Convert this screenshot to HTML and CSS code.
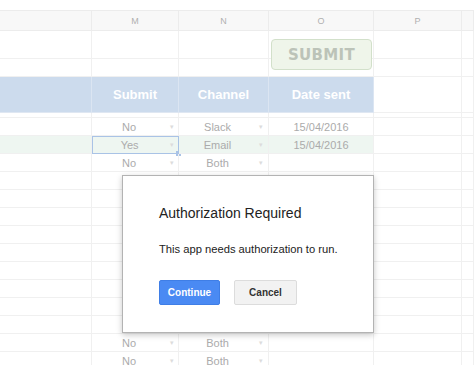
FILE: index.html
```html
<!DOCTYPE html>
<html lang="en">
<head>
    <meta charset="UTF-8">
    <title>Authorization Required</title>
    <link rel="stylesheet" href="styles.css">
</head>
<body>
    <div class="sheet">
        <div class="top-space"></div>

        <div class="row col-head">
            <div class="cell"></div>
            <div class="cell">M</div>
            <div class="cell">N</div>
            <div class="cell">O</div>
            <div class="cell">P</div>
            <div class="cell"></div>
        </div>

        <div class="row tall">
            <div class="cell"></div>
            <div class="cell"></div>
            <div class="cell"></div>
            <div class="cell submit-cell">
                <div class="submit-btn">SUBMIT</div>
            </div>
            <div class="cell"></div>
            <div class="cell"></div>
        </div>
        <div class="row">
            <div class="cell"></div><div class="cell"></div><div class="cell"></div>
            <div class="cell"></div><div class="cell"></div><div class="cell"></div>
        </div>

        <div class="row head">
            <div class="cell"></div>
            <div class="cell">Submit</div>
            <div class="cell">Channel</div>
            <div class="cell">Date sent</div>
            <div class="cell plain"></div>
            <div class="cell plain"></div>
        </div>
        <div class="row gap">
            <div class="cell"></div><div class="cell"></div><div class="cell"></div>
            <div class="cell"></div><div class="cell"></div><div class="cell"></div>
        </div>

        <div id="rows"></div>

        <!-- 授權對話框 -->
        <div class="dialog">
            <h2>Authorization Required</h2>
            <p>This app needs authorization to run.</p>
            <div class="actions">
                <button class="btn primary">Continue</button>
                <button class="btn">Cancel</button>
            </div>
        </div>
    </div>

    <script>
        // 資料列 (對話框後面的列沒有文字)
        const data = [
            ["No", "Slack", "15/04/2016"],
            ["Yes", "Email", "15/04/2016"],
            ["No", "Both", ""],
            ["", "", ""], ["", "", ""], ["", "", ""],
            ["", "", ""], ["", "", ""], ["", "", ""],
            ["", "", ""], ["", "", ""], ["", "", ""],
            ["No", "Both", ""], ["No", "Both", ""]
        ];
        const rows = document.getElementById('rows');

        data.forEach((d, i) => {
            const row = document.createElement('div');
            row.className = 'row' + (i === 1 ? ' active' : '');
            row.innerHTML =
                '<div class="cell"></div>' +
                '<div class="cell drop' + (i === 1 ? ' selected' : '') + '"><span>' + d[0] + '</span><i>' + (d[0] ? '▾' : '') + '</i></div>' +
                '<div class="cell drop"><span>' + d[1] + '</span><i>' + (d[1] ? '▾' : '') + '</i></div>' +
                '<div class="cell date">' + d[2] + '</div>' +
                '<div class="cell plain"></div>' +
                '<div class="cell plain"></div>';
            rows.appendChild(row);
        });
    </script>
</body>
</html>
```

FILE: styles.css
```css
body {
    margin: 0;
    font-family: "Liberation Sans", Arial, sans-serif;
    background: #fff;
    overflow: hidden;
}
.sheet {
    position: relative;
    height: 365px;
}
.top-space {
    height: 10px;
}
.row {
    display: grid;
    grid-template-columns: 92px 87px 90px 105px 88px 1fr;
    height: 18px;
}
.cell {
    box-sizing: border-box;
    border-right: 1px solid #f0f0f0;
    border-bottom: 1px solid #f0f0f0;
    font-size: 11px;
    color: #ababab;
    display: flex;
    align-items: center;
    justify-content: center;
    position: relative;
}

.col-head {
    height: 21px;
    background: #f8f8f8;
    border-top: 1px solid #ececec;
    box-sizing: border-box;
}
.col-head .cell {
    font-size: 9px;
    color: #b0b0b0;
    border-color: #ececec;
    padding-top: 1px;
}
.row.tall {
    height: 28px;
}

/* 表頭 */
.row.head {
    height: 36px;
}
.head .cell {
    background: #ccdbed;
    color: #fff;
    font-weight: bold;
    font-size: 13px;
    border-right-color: #dbe5f2;
    border-bottom-color: #dfe7f2;
}
.head .cell.plain {
    background: #fff;
    border-right-color: #f0f0f0;
    border-bottom-color: #f0f0f0;
}
.row.gap {
    height: 5px;
}

/* 下拉選單儲存格 */
.drop span {
    width: 75px;
    text-align: center;
}
.drop i {
    font-style: normal;
    font-size: 7px;
    color: #dcdcdc;
    width: 12px;
    text-align: center;
}
.active .cell {
    background: #eef6f1;
}
.active .cell.plain {
    background: #fff;
}
.cell.selected {
    border: 1.5px solid #a9c3e6;
}
.cell.selected::after {
    content: "";
    position: absolute;
    right: -3px;
    bottom: -3px;
    width: 5px;
    height: 5px;
    background: #a9c3e6;
}

/* SUBMIT 按鈕 */
.submit-btn {
    position: absolute;
    left: 2px;
    top: 8px;
    width: 101px;
    height: 31px;
    box-sizing: border-box;
    border: 1px solid #d2e0ca;
    border-radius: 4px;
    background: #eff5ea;
    color: #bcc3b8;
    font-family: "DejaVu Sans", sans-serif;
    font-weight: bold;
    font-size: 15px;
    letter-spacing: 0.3px;
    display: flex;
    align-items: center;
    justify-content: center;
    z-index: 1;
}

/* 對話框 */
.dialog {
    position: absolute;
    left: 122px;
    top: 175px;
    width: 252px;
    height: 158px;
    box-sizing: border-box;
    background: #fff;
    border: 1px solid #b3b3b3;
    box-shadow: 0 2px 6px rgba(0, 0, 0, 0.22);
    padding: 29px 0 0 36px;
    z-index: 2;
}
.dialog h2 {
    margin: 0;
    font-size: 14px;
    font-weight: normal;
    color: #222;
    line-height: 16px;
}
.dialog p {
    margin: 21px 0 0;
    font-size: 11.2px;
    color: #222;
    line-height: 14px;
}
.actions {
    display: flex;
    gap: 14px;
    margin-top: 24px;
}
.btn {
    height: 25px;
    width: 63px;
    box-sizing: border-box;
    border: 1px solid #dcdcdc;
    border-radius: 2px;
    background: #f2f2f2;
    color: #333;
    font-family: "Liberation Sans", Arial, sans-serif;
    font-weight: bold;
    font-size: 10px;
    padding: 0;
}
.btn.primary {
    width: 61px;
    background: #4a8af3;
    border-color: #3f7ee6;
    color: #fff;
}
```
